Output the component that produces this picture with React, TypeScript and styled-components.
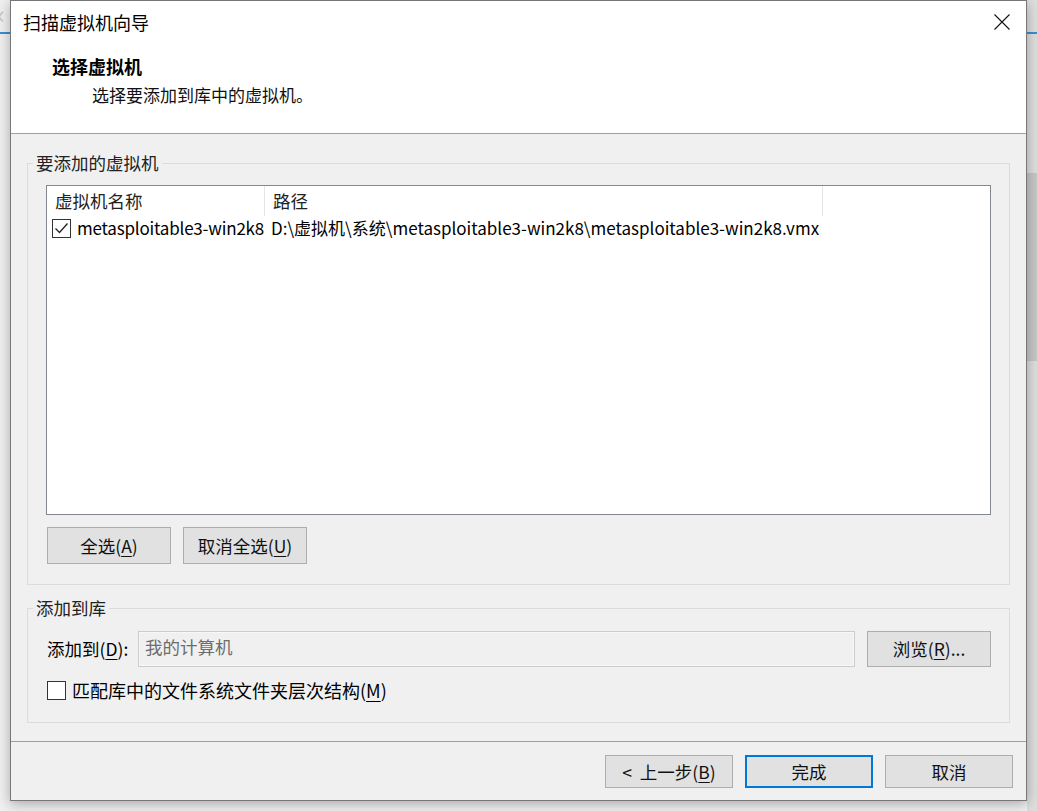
import React from 'react';
import styled, { createGlobalStyle } from 'styled-components';

const GlobalStyle = createGlobalStyle`
  html, body {
    margin: 0;
    padding: 0;
  }
  body {
    font-family: "Noto Sans CJK SC", "Noto Sans", sans-serif;
    color: #000;
    overflow: hidden;
  }
`;

// window sitting behind the dialog: blue accent line + scrollbar strip on the right
const Desktop = styled.div`
  position: relative;
  width: 1037px;
  height: 811px;
  box-sizing: border-box;
  padding-left: 10px;
  background:
    linear-gradient(#3d8ed0, #3d8ed0) 0 32px / 100% 2px no-repeat,
    linear-gradient(#c6c6c6, #c6c6c6) right 0 top 173px / 10px 188px no-repeat,
    linear-gradient(90deg, #f0f0f0 0 1027px, #dedede 1027px) 0 0 / 100% 100% no-repeat;

  &::before {
    content: '‹';
    position: absolute;
    left: -3px;
    top: -6px;
    font-size: 26px;
    color: #c4c4c4;
  }
`;

const Dialog = styled.div`
  position: relative;
  width: 1017px;
  height: 801px;
  box-sizing: border-box;
  border: 1px solid #777;
  background: #f0f0f0;
  display: flex;
  flex-direction: column;
  box-shadow: 0 3px 12px rgba(0, 0, 0, 0.3);
`;

const Header = styled.div`
  flex-shrink: 0;
  height: 133px;
  box-sizing: border-box;
  background: #fff;
  border-bottom: 1px solid #a0a0a0;
`;

const TitleBar = styled.div`
  height: 42px;
  display: flex;
  align-items: center;
  justify-content: space-between;
  padding: 0 16px 0 12px;
`;

const Title = styled.div`
  font-size: 18px;
  line-height: 24px;
`;

const CloseButton = styled.button`
  width: 17px;
  height: 17px;
  padding: 0;
  border: 0;
  background: transparent;
  display: flex;
  align-items: center;
  justify-content: center;
`;

const PageHeading = styled.div`
  margin: 11px 0 0 41px;
  font-size: 18px;
  font-weight: bold;
  line-height: 24px;
`;

const PageSubtitle = styled.div`
  margin: 5px 0 0 81px;
  font-size: 17px;
  line-height: 24px;
  color: #111;
`;

const Body = styled.div`
  flex: 1;
  padding: 19px 16px 17px;
  display: flex;
  flex-direction: column;
  gap: 13px;
`;

const GroupBox = styled.fieldset`
  flex-shrink: 0;
  margin: 0;
  padding: 0 18px 20px;
  border: 1px solid #dcdcdc;
  min-width: 0;
`;

const GroupTitle = styled.legend`
  margin-left: -13px;
  padding: 0 3px;
  font-size: 17.5px;
  line-height: 20px;
  color: #222;
`;

const ListView = styled.div`
  margin-top: 12px;
  height: 330px;
  box-sizing: border-box;
  border: 1px solid #828790;
  background: #fff;
`;

const ListHeader = styled.div`
  display: flex;
  height: 30px;
`;

const HeaderCell = styled.div<{ $w: number }>`
  width: ${p => p.$w}px;
  box-sizing: border-box;
  padding-left: 8px;
  border-right: 1px solid #e5e5e5;
  font-size: 17.5px;
  line-height: 30px;
  color: #222;
`;

const ListRow = styled.div`
  display: flex;
  height: 24px;
  align-items: center;
`;

const Cell = styled.div<{ $w: number; $pad: number; $tight?: boolean }>`
  width: ${p => p.$w}px;
  box-sizing: border-box;
  padding-left: ${p => p.$pad}px;
  display: flex;
  align-items: center;
  gap: 6px;
  font-size: 17px;
  line-height: 24px;
  letter-spacing: ${p => (p.$tight ? '-0.2px' : '0')};
  white-space: nowrap;
  overflow: hidden;
`;

const Box = styled.span`
  flex-shrink: 0;
  width: 19px;
  height: 19px;
  box-sizing: border-box;
  border: 1px solid #333;
  background: #fff;
  display: flex;
  align-items: center;
  justify-content: center;
`;

const ButtonRow = styled.div`
  margin-top: 12px;
  padding-left: 1px;
  display: flex;
  gap: 12px;
`;

const Button = styled.button<{ $w: number; $h: number; $primary?: boolean }>`
  width: ${p => p.$w}px;
  height: ${p => p.$h}px;
  box-sizing: border-box;
  padding: 0;
  font-family: inherit;
  font-size: 17.5px;
  line-height: 22px;
  color: #111;
  background: #e1e1e1;
  border: ${p => (p.$primary ? '2px solid #0078d7' : '1px solid #adadad')};
  white-space: pre;
`;

const Key = styled.u`
  text-underline-offset: 3px;
`;

const FieldRow = styled.div`
  margin-top: 13px;
  height: 36px;
  display: flex;
  align-items: center;
`;

const FieldLabel = styled.label`
  width: 92px;
  padding-left: 1px;
  box-sizing: border-box;
  font-size: 17.5px;
  line-height: 24px;
`;

const TextField = styled.div`
  width: 717px;
  height: 36px;
  box-sizing: border-box;
  margin-right: 12px;
  padding-left: 6px;
  border: 1px solid #cccccc;
  box-shadow: inset 0 0 0 1px #f7f7f7;
  background: #f0f0f0;
  color: #6d6d6d;
  font-size: 17.5px;
  line-height: 30px;
`;

const CheckRow = styled.label`
  margin-top: 12px;
  height: 23px;
  padding-left: 1px;
  display: flex;
  align-items: center;
  gap: 6px;
  font-size: 18px;
  line-height: 23px;
`;

const Footer = styled.div`
  flex-shrink: 0;
  height: 59px;
  box-sizing: border-box;
  border-top: 1px solid #a0a0a0;
  padding: 13px 13px 0 0;
  display: flex;
  justify-content: flex-end;
  gap: 12px;
`;

const CheckBox = ({ checked }: { checked?: boolean }) => (
  <Box>
    {checked && (
      <svg width="15" height="15" viewBox="0 0 15 15">
        <path d="M1.5 7.5 L5.5 11.5 L13.5 2.5" fill="none" stroke="#222" strokeWidth="1.3" />
      </svg>
    )}
  </Box>
);

export default function App() {
  return (
    <>
      <GlobalStyle />
      <Desktop>
        <Dialog>
          <Header>
            <TitleBar>
              <Title>扫描虚拟机向导</Title>
              <CloseButton>
                <svg width="16" height="16" viewBox="0 0 16 16">
                  <path d="M0.5 0.5 L15.5 15.5 M15.5 0.5 L0.5 15.5" stroke="#111" strokeWidth="1.1" />
                </svg>
              </CloseButton>
            </TitleBar>
            <PageHeading>选择虚拟机</PageHeading>
            <PageSubtitle>选择要添加到库中的虚拟机。</PageSubtitle>
          </Header>

          <Body>
            <GroupBox>
              <GroupTitle>要添加的虚拟机</GroupTitle>
              <ListView>
                <ListHeader>
                  <HeaderCell $w={218}>虚拟机名称</HeaderCell>
                  <HeaderCell $w={558}>路径</HeaderCell>
                </ListHeader>
                <ListRow>
                  <Cell $w={218} $pad={5} $tight>
                    <CheckBox checked />
                    <span>metasploitable3-win2k8</span>
                  </Cell>
                  <Cell $w={600} $pad={6}>
                    <span>D:\虚拟机\系统\metasploitable3-win2k8\metasploitable3-win2k8.vmx</span>
                  </Cell>
                </ListRow>
              </ListView>
              <ButtonRow>
                <Button $w={124} $h={37}>
                  全选(<Key>A</Key>)
                </Button>
                <Button $w={124} $h={37}>
                  取消全选(<Key>U</Key>)
                </Button>
              </ButtonRow>
            </GroupBox>

            <GroupBox>
              <GroupTitle>添加到库</GroupTitle>
              <FieldRow>
                <FieldLabel>
                  添加到(<Key>D</Key>):
                </FieldLabel>
                <TextField>我的计算机</TextField>
                <Button $w={124} $h={36}>
                  浏览(<Key>R</Key>)...
                </Button>
              </FieldRow>
              <CheckRow>
                <CheckBox />
                <span>
                  匹配库中的文件系统文件夹层次结构(<Key>M</Key>)
                </span>
              </CheckRow>
            </GroupBox>
          </Body>

          <Footer>
            <Button $w={128} $h={33}>
              {'<  上一步'}(<Key>B</Key>)
            </Button>
            <Button $w={128} $h={33} $primary>
              完成
            </Button>
            <Button $w={128} $h={33}>
              取消
            </Button>
          </Footer>
        </Dialog>
      </Desktop>
    </>
  );
}
